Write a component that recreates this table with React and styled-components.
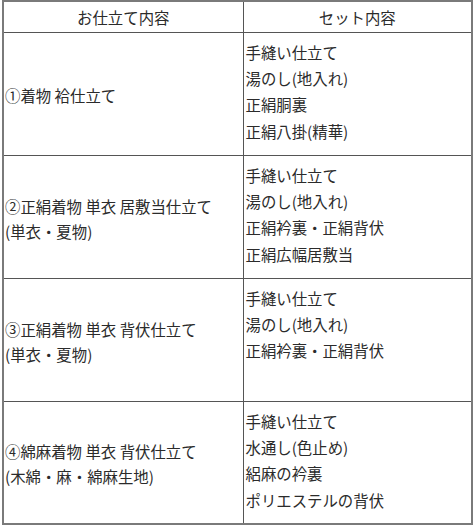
import React from "react";
import styled, { createGlobalStyle } from "styled-components";

const rows = [
  {
    plan: ["①着物 袷仕立て"],
    set: ["手縫い仕立て", "湯のし(地入れ)", "正絹胴裏", "正絹八掛(精華)"],
  },
  {
    plan: ["②正絹着物 単衣 居敷当仕立て", "(単衣・夏物)"],
    set: ["手縫い仕立て", "湯のし(地入れ)", "正絹衿裏・正絹背伏", "正絹広幅居敷当"],
  },
  {
    plan: ["③正絹着物 単衣 背伏仕立て", "(単衣・夏物)"],
    set: ["手縫い仕立て", "湯のし(地入れ)", "正絹衿裏・正絹背伏"],
  },
  {
    plan: ["④綿麻着物 単衣 背伏仕立て", "(木綿・麻・綿麻生地)"],
    set: ["手縫い仕立て", "水通し(色止め)", "絽麻の衿裏", "ポリエステルの背伏"],
  },
];

const GlobalStyle = createGlobalStyle`
  body {
    margin: 0;
    background: #fff;
    font-family: "Noto Sans CJK JP", "Noto Sans", sans-serif;
    color: #2b2b2b;
  }
`;

const Table = styled.table`
  margin-left: 2px;
  width: 469px;
  border-collapse: collapse;
  table-layout: fixed;
  border: 2px solid #7a7a7a;
  font-size: 15.4px;
`;

const HeadCell = styled.th`
  height: 31px;
  padding: 0;
  box-sizing: border-box;
  font-weight: normal;
  text-align: center;
  border: 1px solid #555;
  border-top: 2px solid #7a7a7a;
  width: ${(p) => p.$w}px;
`;

const Row = styled.tr`
  height: 123px;
`;

const Cell = styled.td`
  padding: ${(p) => (p.$list ? "6px 2px 10px" : "4px 2px 0 1px")};
  border: 1px solid #555;
  vertical-align: ${(p) => (p.$list ? "top" : "middle")};
`;

const Line = styled.div`
  line-height: ${(p) => (p.$tight ? 25 : 26.4)}px;
  white-space: nowrap;
`;

export default function App() {
  return (
    <>
      <GlobalStyle />
      <Table>
        <thead>
          <tr>
            <HeadCell $w={240}>お仕立て内容</HeadCell>
            <HeadCell $w={229}>セット内容</HeadCell>
          </tr>
        </thead>
        <tbody>
          {rows.map((r, i) => (
            <Row key={i}>
              <Cell>
                {r.plan.map((t) => (
                  <Line $tight key={t}>
                    {t}
                  </Line>
                ))}
              </Cell>
              <Cell $list>
                {r.set.map((t) => (
                  <Line key={t}>{t}</Line>
                ))}
              </Cell>
            </Row>
          ))}
        </tbody>
      </Table>
    </>
  );
}
